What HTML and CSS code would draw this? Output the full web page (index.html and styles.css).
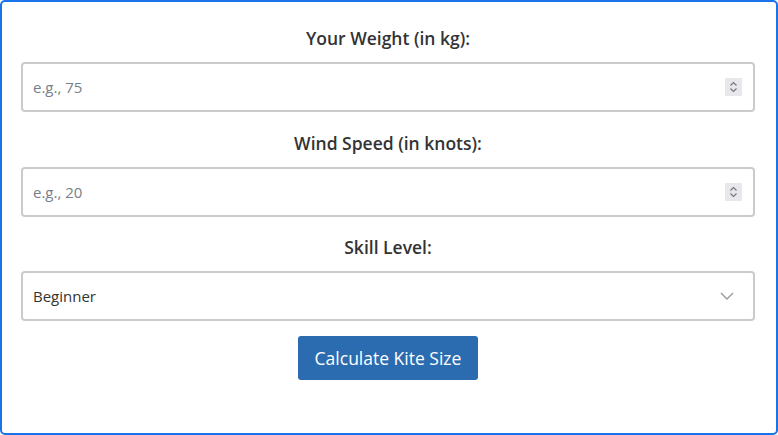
FILE: index.html
```html
<!DOCTYPE html>
<html>
  <head>
    <meta charset="UTF-8" />
    <title>Kite Size Calculator</title>
    <link rel="stylesheet" href="styles.css">
  </head>
  <body>
    <div class="container">
      <form class="kite-form">
        <div class="form-group">
          <label for="weight">Your Weight (in kg):</label>
          <div class="field">
            <input type="text" id="weight" placeholder="e.g., 75" class="field-input" />
            <span class="spinner">
              <svg width="17" height="18" viewBox="0 0 17 18">
                <rect width="17" height="18" fill="#e8e8ec" />
                <path d="M5.5 7.5 L8.5 4.5 L11.5 7.5" fill="none" stroke="#777" stroke-width="1.2" />
                <path d="M5.5 10.5 L8.5 13.5 L11.5 10.5" fill="none" stroke="#777" stroke-width="1.2" />
              </svg>
            </span>
          </div>
        </div>

        <div class="form-group">
          <label for="wind">Wind Speed (in knots):</label>
          <div class="field">
            <input type="text" id="wind" placeholder="e.g., 20" class="field-input" />
            <span class="spinner">
              <svg width="17" height="18" viewBox="0 0 17 18">
                <rect width="17" height="18" fill="#e8e8ec" />
                <path d="M5.5 7.5 L8.5 4.5 L11.5 7.5" fill="none" stroke="#777" stroke-width="1.2" />
                <path d="M5.5 10.5 L8.5 13.5 L11.5 10.5" fill="none" stroke="#777" stroke-width="1.2" />
              </svg>
            </span>
          </div>
        </div>

        <div class="form-group">
          <label for="skill">Skill Level:</label>
          <div class="field">
            <select id="skill" class="field-input">
              <option>Beginner</option>
              <option>Intermediate</option>
              <option>Advanced</option>
            </select>
            <span class="chevron">
              <svg width="14" height="10" viewBox="0 0 14 10">
                <path d="M1 2 L7 8 L13 2" fill="none" stroke="#999" stroke-width="1.4" />
              </svg>
            </span>
          </div>
        </div>

        <button type="button" class="button">Calculate Kite Size</button>
      </form>
    </div>
  </body>
</html>
```

FILE: styles.css
```css
* {
  box-sizing: border-box;
}

body {
  margin: 0;
  font-family: "Open Sans", "Noto Sans", sans-serif;
  color: #333;
  background-color: white;
}

.container {
  width: 778px;
  height: 435px;
  border: 2px solid #1a73e8;
  border-radius: 5px;
  padding: 24px 21px 20px 19px;
}

.kite-form {
  display: flex;
  flex-direction: column;
  align-items: center;
}

.form-group {
  width: 100%;
  display: flex;
  flex-direction: column;
  align-items: center;
  margin-bottom: 18.5px;
}

.form-group:last-of-type {
  margin-bottom: 15px;
}

.form-group label {
  font-size: 17.5px;
  font-weight: 600;
  line-height: 24px;
  margin-bottom: 12px;
}

.field {
  width: 100%;
  height: 50px;
  display: flex;
  align-items: center;
  border: 2px solid #cbcbcb;
  border-radius: 4px;
  padding: 0 11px 0 10px;
}

.field-input {
  flex: 1;
  border: none;
  outline: none;
  background: transparent;
  font-family: inherit;
  font-size: 15px;
  color: #333;
  padding: 0;
  appearance: none;
  -webkit-appearance: none;
}

.field-input::placeholder {
  color: #77808a;
}

.spinner {
  display: flex;
}

.chevron {
  display: flex;
  margin-right: 8px;
}

.button {
  background-color: #2b6cb0;
  color: white;
  border: none;
  border-radius: 3px;
  width: 180px;
  height: 44px;
  font-family: inherit;
  font-size: 17.5px;
  cursor: pointer;
}

.button:hover {
  background-color: #245d99;
}
```
